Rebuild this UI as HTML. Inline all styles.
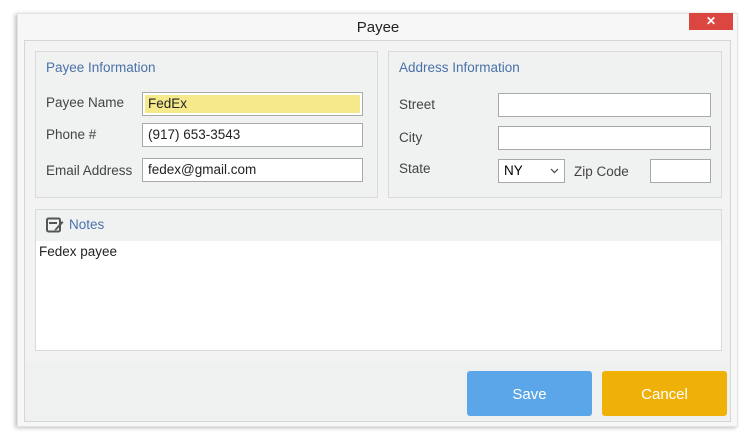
<!DOCTYPE html>
<html><head><style>
*{box-sizing:border-box;margin:0;padding:0}
body{width:756px;height:438px;background:#fff;font-family:"Segoe UI","Liberation Sans",sans-serif;position:relative;overflow:hidden;color:#333}
.abs{position:absolute}
.win{left:17px;top:13px;width:721px;height:414px;background:#f7f7f7;border:1px solid #e2e2e2;box-shadow:-2px 1px 4px rgba(0,0,0,.25)}
.inner{left:24px;top:40px;width:707px;height:382px;border:1px solid #d6d6d6;background:#f3f3f3}
.grp{background:#f0f1f1;border:1px solid #dadada}
.h{color:#4a72a8;font-size:13.5px}
.lbl{font-size:13.5px;color:#444}
.in{background:#fff;border:1px solid #a9a9a9;font-size:13.5px;color:#222;padding:3px 5px;height:24px}
.btn{color:#fff;font-size:15px;text-align:center;line-height:47px;border-radius:3px}
</style></head><body>
<div class="abs win"></div>
<div class="abs" style="left:0;top:19px;width:756px;text-align:center;font-size:15px;color:#222">Payee</div>
<div class="abs" style="left:689px;top:13px;width:44px;height:17px;background:#db4640;color:#fff;font-size:12px;font-weight:bold;text-align:center;line-height:17px">✕</div>
<div class="abs inner"></div>
<div class="abs grp" style="left:35px;top:51px;width:343px;height:147px"></div>
<div class="abs h" style="left:46px;top:60px">Payee Information</div>
<div class="abs lbl" style="left:46px;top:95px">Payee Name</div>
<div class="abs lbl" style="left:46px;top:127px">Phone #</div>
<div class="abs lbl" style="left:46px;top:163px">Email Address</div>
<div class="abs in" style="left:142px;top:92px;width:221px;padding:2px"><div style="background:#f5e98c;height:18px;padding:0 3px;line-height:18px">FedEx</div></div>
<div class="abs in" style="left:142px;top:123px;width:221px">(917) 653-3543</div>
<div class="abs in" style="left:142px;top:158px;width:221px">fedex@gmail.com</div>
<div class="abs grp" style="left:388px;top:51px;width:334px;height:147px"></div>
<div class="abs h" style="left:399px;top:60px">Address Information</div>
<div class="abs lbl" style="left:399px;top:97px">Street</div>
<div class="abs lbl" style="left:399px;top:130px">City</div>
<div class="abs lbl" style="left:399px;top:161px">State</div>
<div class="abs lbl" style="left:574px;top:164px">Zip Code</div>
<div class="abs in" style="left:498px;top:93px;width:213px"></div>
<div class="abs in" style="left:498px;top:126px;width:213px"></div>
<div class="abs in" style="left:498px;top:159px;width:67px;color:#000">NY<svg style="position:absolute;right:5px;top:8px" width="9" height="6" viewBox="0 0 9 6"><path d="M1 1 L4.5 4.5 L8 1" fill="none" stroke="#444" stroke-width="1.2"/></svg></div>
<div class="abs in" style="left:650px;top:159px;width:61px"></div>
<div class="abs" style="left:35px;top:209px;width:687px;height:142px;border:1px solid #dadada;background:#fff"></div>
<div class="abs" style="left:36px;top:210px;width:685px;height:31px;background:#f0f1f1"></div>
<svg class="abs" style="left:46px;top:217px" width="18" height="17" viewBox="0 0 18 17"><rect x="1" y="1.5" width="13" height="13" rx="1.5" fill="none" stroke="#555" stroke-width="2"/><rect x="3" y="5" width="8" height="2" fill="#555"/><path d="M9 12 L16 4 L17.5 5.5 L10.5 13 L8.5 13.5Z" fill="#555"/></svg>
<div class="abs h" style="left:69px;top:217px">Notes</div>
<div class="abs" style="left:39px;top:244px;font-size:13.5px;color:#222">Fedex payee</div>
<div class="abs" style="left:25px;top:361px;width:705px;height:60px;background:#eff0f0"></div>
<div class="abs btn" style="left:467px;top:371px;width:125px;height:45px;background:#5ba6e8">Save</div>
<div class="abs btn" style="left:602px;top:371px;width:125px;height:45px;background:#efb007">Cancel</div>
</body></html>
